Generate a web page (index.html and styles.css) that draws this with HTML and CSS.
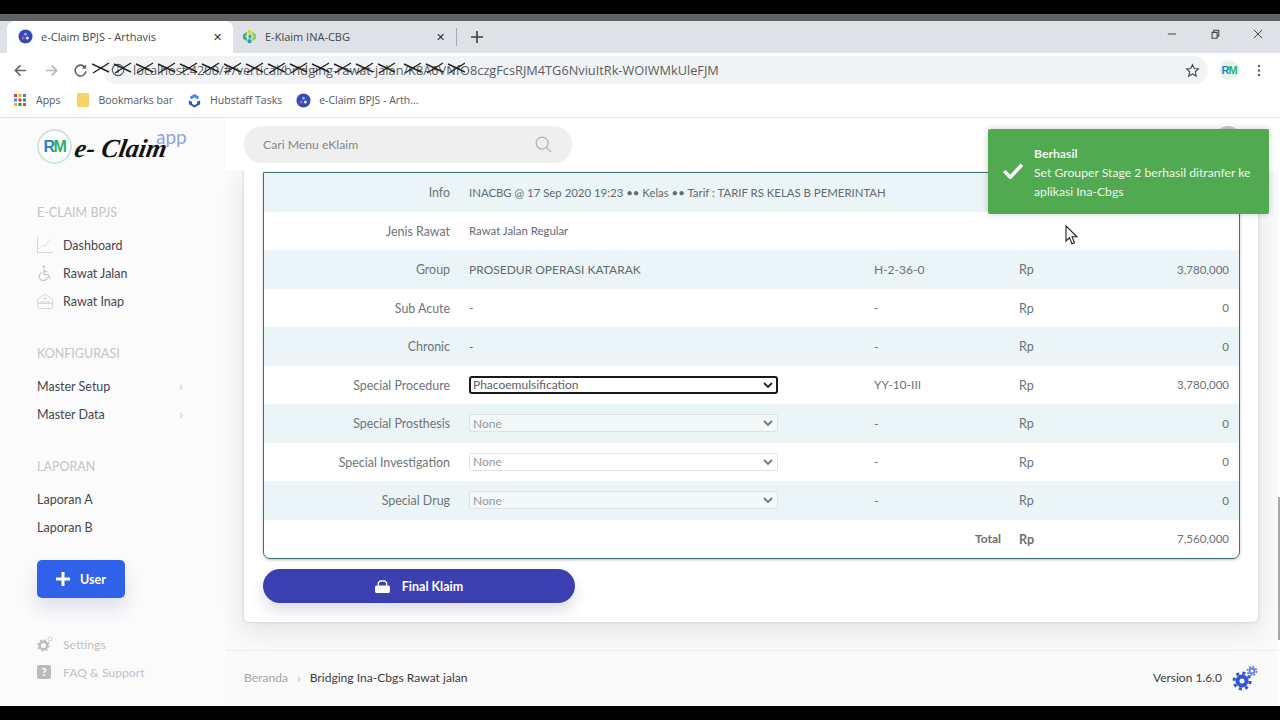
FILE: index.html
```html
<!DOCTYPE html>
<html lang="id">
  <head>
    <meta charset="UTF-8" />
    <title>e-Claim BPJS - Arthavis</title>
    <link rel="stylesheet" href="styles.css">
  </head>
  <body>
    <div class="letterbox-top"></div>

    <!-- Browser: tabs -->
    <div class="tabbar">
      <div class="tab tab-active">
        <svg class="favicon" viewBox="0 0 16 16"><circle cx="8" cy="8" r="7.500" fill="#2f4cb8"/><circle cx="5.600" cy="9.500" r="1.600" fill="#e8506a"/><circle cx="10" cy="9.500" r="1.600" fill="#e8eaf6"/><circle cx="8" cy="5.500" r="1.400" fill="#9fb2ee"/></svg>
        <span class="tab-title">e-Claim BPJS - Arthavis</span>
        <span class="tab-close">✕</span>
      </div>
      <div class="tab">
        <svg class="favicon" viewBox="0 0 16 16"><path d="M6 1h4v4H6z" fill="#e4d43a"/><path d="M1 6l4-3v4l-2 1 2 1v4L1 10z" fill="#35b27a"/><path d="M7 6h3v4H7z" fill="#35b27a"/><path d="M11 3l4 3v4l-4 3v-4l2-1-2-1z" fill="#8ccf47"/><path d="M6 11h4v4H6z" fill="#2d9bc7"/></svg>
        <span class="tab-title">E-Klaim INA-CBG</span>
        <span class="tab-close">✕</span>
      </div>
      <span class="tab-sep"></span>
      <svg class="new-tab" viewBox="0 0 12 12"><path d="M6 0v12M0 6h12" stroke="#3c4043" stroke-width="1.600"/></svg>
      <div class="window-btns">
        <svg viewBox="0 0 12 12"><path d="M1 6h10" stroke="#444" stroke-width="1.200"/></svg>
        <svg viewBox="0 0 12 12"><path d="M2.500 4h6v7h-6zM4.500 4V1.500h6v7H8.500" fill="none" stroke="#444" stroke-width="1.300"/></svg>
        <svg viewBox="0 0 12 12"><path d="M1 1l10 10M11 1L1 11" stroke="#444" stroke-width="1.200"/></svg>
      </div>
    </div>

    <!-- Browser: address bar -->
    <div class="toolbar">
      <svg class="nav-icon" viewBox="0 0 16 16"><path d="M14 8H3M8 2.500L2.500 8 8 13.500" fill="none" stroke="#5f6368" stroke-width="1.700"/></svg>
      <svg class="nav-icon nav-forward" viewBox="0 0 16 16"><path d="M2 8h11M8 2.500L13.500 8 8 13.500" fill="none" stroke="#b4b7bb" stroke-width="1.700"/></svg>
      <svg class="nav-icon" viewBox="0 0 16 16"><path d="M13 5A5.800 5.800 0 1 0 13.800 9" fill="none" stroke="#5f6368" stroke-width="1.700"/><path d="M14 1.500V6H9.500z" fill="#5f6368"/></svg>
      <div class="omnibox">
        <svg class="info-icon" viewBox="0 0 16 16"><circle cx="8" cy="8" r="6.500" fill="none" stroke="#5f6368" stroke-width="1.400"/><path d="M8 7v4.500M8 4.500v1.400" stroke="#5f6368" stroke-width="1.400"/></svg>
        <span class="url">localhost:4200/#/vertical/bridging-rawat-jalan/K8A6VNfO8czgFcsRJM4TG6NviuItRk-WOIWMkUleFJM</span>
        <svg class="star" viewBox="0 0 16 16"><path d="M8 1.800l1.900 4.100 4.400.5-3.300 3 .9 4.400L8 11.600l-3.900 2.200.9-4.400-3.300-3 4.400-.5z" fill="none" stroke="#4a4d51" stroke-width="1.300"/></svg>
      </div>
      <span class="profile"><b>R</b><i>M</i></span>
      <svg class="menu-dots" viewBox="0 0 4 16"><circle cx="2" cy="2.500" r="1.500" fill="#5f6368"/><circle cx="2" cy="8" r="1.500" fill="#5f6368"/><circle cx="2" cy="13.500" r="1.500" fill="#5f6368"/></svg>
      <!-- coretan X di atas url -->
      <svg class="scribble" viewBox="0 0 373 12">
        <path d="M0 2l17 8M17 1L1 11M22 2l17 8M39 1L23 11M44 2l17 8M61 1L45 11M66 2l17 8M83 1L67 11M88 2l17 8M105 1L89 11M110 2l17 8M127 1l-16 10M132 2l17 8M149 1l-16 10M154 2l17 8M171 1l-16 10M176 2l17 8M193 1l-16 10M198 2l17 8M215 1l-16 10M220 2l17 8M237 1l-16 10M242 2l17 8M259 1l-16 10M264 2l17 8M281 1l-16 10M286 2l17 8M303 1l-16 10M312 2l17 8M329 1l-16 10M334 2l17 8M351 1l-16 10M356 2l17 8M373 1l-16 10" fill="none" stroke="#222" stroke-width="1.400"/>
      </svg>
    </div>

    <!-- Browser: bookmarks -->
    <div class="bookmarks">
      <span class="bookmark">
        <svg class="bm-icon" viewBox="0 0 12 12">
          <path d="M0 0h3v3H0z" fill="#db4437"/><path d="M4.500 0h3v3h-3z" fill="#f4b400"/><path d="M9 0h3v3H9z" fill="#4285f4"/>
          <path d="M0 4.500h3v3H0z" fill="#4285f4"/><path d="M4.500 4.500h3v3h-3z" fill="#db4437"/><path d="M9 4.500h3v3H9z" fill="#0f9d58"/>
          <path d="M0 9h3v3H0z" fill="#f4b400"/><path d="M4.500 9h3v3h-3z" fill="#0f9d58"/><path d="M9 9h3v3H9z" fill="#db4437"/>
        </svg>Apps
      </span>
      <span class="bookmark">
        <svg class="bm-icon bm-folder" viewBox="0 0 12 14"><path d="M1 0h10l1 1v12l-1 1H1l-1-1V1z" fill="#f6d365"/></svg>Bookmarks bar
      </span>
      <span class="bookmark">
        <svg class="bm-icon bm-hub" viewBox="0 0 16 16"><path d="M8 1l5 3-1.500 3L8 4.500 4.500 7 3 4z" fill="#3f8fe8"/><path d="M2 8l3 1 .5 2.500L8 13l2.500-1.500L11 9l3-1v4l-6 3.500L2 12z" fill="#2456c8"/></svg>Hubstaff Tasks
      </span>
      <span class="bookmark">
        <svg class="bm-icon bm-hub" viewBox="0 0 16 16"><circle cx="8" cy="8" r="7.500" fill="#2f4cb8"/><circle cx="5.600" cy="9.500" r="1.600" fill="#e8506a"/><circle cx="10" cy="9.500" r="1.600" fill="#e8eaf6"/><circle cx="8" cy="5.500" r="1.400" fill="#9fb2ee"/></svg>e-Claim BPJS - Arth...
      </span>
    </div>

    <div class="app">
      <!-- Sidebar -->
      <aside class="sidebar">
        <div class="logo">
          <span class="logo-mark"><b>R</b><i>M</i></span>
          <span class="logo-text">e- Claim</span>
          <span class="logo-app">app</span>
        </div>

        <h4 class="nav-title first">E-CLAIM BPJS</h4>
        <a class="nav-item">
          <svg class="nav-svg" viewBox="0 0 16 16"><path d="M.5 0v15.500H16" fill="none" stroke="#d4d6da"/><path d="M2.500 12l3-4 2.500 2 3-5 3-3" fill="none" stroke="#d4d6da" stroke-dasharray="1.500 1"/></svg>
          Dashboard
        </a>
        <a class="nav-item">
          <svg class="nav-svg" viewBox="0 0 16 16"><circle cx="7" cy="1.800" r="1.300" fill="#c4c7cb"/><path d="M7 4v5.500h4l2 4.500M7 6.500h3.500M4.800 7.500a4.200 4.200 0 1 0 5.600 5" fill="none" stroke="#c4c7cb" stroke-width="1.200"/></svg>
          Rawat Jalan
        </a>
        <a class="nav-item">
          <svg class="nav-svg" viewBox="0 0 16 16"><path d="M.5 6.500L8 1l7.500 5.500v8l-1 1h-13l-1-1zM.5 10.500h15M3.500 10.500V9h9v1.500M8 4v3M6.500 5.500h3" fill="none" stroke="#d4d6da"/></svg>
          Rawat Inap
        </a>

        <h4 class="nav-title">KONFIGURASI</h4>
        <a class="nav-item plain">Master Setup<span class="chev">›</span></a>
        <a class="nav-item plain">Master Data<span class="chev">›</span></a>

        <h4 class="nav-title">LAPORAN</h4>
        <a class="nav-item plain">Laporan A</a>
        <a class="nav-item plain">Laporan B</a>

        <button class="btn-user">
          <svg viewBox="0 0 14 14"><path d="M7 0v14M0 7h14" stroke="#fff" stroke-width="3"/></svg>
          User
        </button>

        <a class="nav-item muted">
          <svg class="nav-svg" viewBox="0 0 16 16"><circle cx="6.500" cy="9.500" r="3.800" fill="none" stroke="#b9bbbf" stroke-width="2.400"/><circle cx="6.500" cy="9.500" r="5.600" fill="none" stroke="#b9bbbf" stroke-width="1.400" stroke-dasharray="2 2.400"/><circle cx="13" cy="3" r="2" fill="none" stroke="#cfd1d4"/></svg>
          Settings
        </a>
        <a class="nav-item muted">
          <span class="faq-box">?</span>
          FAQ &amp; Support
        </a>
      </aside>

      <div class="content">
        <!-- Topbar -->
        <header class="topbar">
          <div class="search">
            <span>Cari Menu eKlaim</span>
            <svg viewBox="0 0 18 18"><circle cx="7.500" cy="7.500" r="6.300" fill="none" stroke="#b0b2b5" stroke-width="1.300"/><path d="M12 12l5 5" stroke="#b0b2b5" stroke-width="1.300"/></svg>
          </div>
        </header>

        <main class="main">
          <section class="card">
            <div class="panel">
              <div class="row tint">
                <div class="lbl">Info</div>
                <div class="val info-text">INACBG @ 17 Sep 2020 19:23 •• Kelas •• Tarif : TARIF RS KELAS B PEMERINTAH</div>
              </div>
              <div class="row">
                <div class="lbl">Jenis Rawat</div>
                <div class="val info-text">Rawat Jalan Regular</div>
              </div>
              <div class="row tint">
                <div class="lbl">Group</div>
                <div class="val">PROSEDUR OPERASI KATARAK</div>
                <div class="code">H-2-36-0</div>
                <div class="rp">Rp</div>
                <div class="amt">3,780,000</div>
              </div>
              <div class="row">
                <div class="lbl">Sub Acute</div>
                <div class="val">-</div>
                <div class="code">-</div>
                <div class="rp">Rp</div>
                <div class="amt">0</div>
              </div>
              <div class="row tint">
                <div class="lbl">Chronic</div>
                <div class="val">-</div>
                <div class="code">-</div>
                <div class="rp">Rp</div>
                <div class="amt">0</div>
              </div>
              <div class="row">
                <div class="lbl">Special Procedure</div>
                <div class="val"><div class="select focus">Phacoemulsification<svg viewBox="0 0 10 6"><path d="M1 1l4 4 4-4" fill="none" stroke="#222" stroke-width="1.800"/></svg></div></div>
                <div class="code">YY-10-III</div>
                <div class="rp">Rp</div>
                <div class="amt">3,780,000</div>
              </div>
              <div class="row tint">
                <div class="lbl">Special Prosthesis</div>
                <div class="val"><div class="select">None<svg viewBox="0 0 10 6"><path d="M1 1l4 4 4-4" fill="none" stroke="#777" stroke-width="1.800"/></svg></div></div>
                <div class="code">-</div>
                <div class="rp">Rp</div>
                <div class="amt">0</div>
              </div>
              <div class="row">
                <div class="lbl">Special Investigation</div>
                <div class="val"><div class="select">None<svg viewBox="0 0 10 6"><path d="M1 1l4 4 4-4" fill="none" stroke="#777" stroke-width="1.800"/></svg></div></div>
                <div class="code">-</div>
                <div class="rp">Rp</div>
                <div class="amt">0</div>
              </div>
              <div class="row tint">
                <div class="lbl">Special Drug</div>
                <div class="val"><div class="select">None<svg viewBox="0 0 10 6"><path d="M1 1l4 4 4-4" fill="none" stroke="#777" stroke-width="1.800"/></svg></div></div>
                <div class="code">-</div>
                <div class="rp">Rp</div>
                <div class="amt">0</div>
              </div>
              <div class="row">
                <div class="lbl"></div>
                <div class="val"></div>
                <div class="code total-lbl">Total</div>
                <div class="rp total-rp">Rp</div>
                <div class="amt">7,560,000</div>
              </div>
            </div>

            <button class="btn-final">
              <svg viewBox="0 0 16 14"><path d="M1 6h14l1 1v6l-1 1H1l-1-1V7z" fill="#fff"/><path d="M3.500 6V3l2-2h5l2 2v3" fill="none" stroke="#fff" stroke-width="1.500"/></svg>
              Final Klaim
            </button>
          </section>
        </main>

        <footer class="footer">
          <div class="crumbs">
            <span class="crumb-muted">Beranda</span>
            <span class="crumb-sep">›</span>
            <span class="crumb-now">Bridging Ina-Cbgs Rawat jalan</span>
          </div>
          <div class="version">
            Version 1.6.0
            <svg viewBox="0 0 26 26"><circle cx="10" cy="16" r="4.500" fill="none" stroke="#2f55d4" stroke-width="4"/><circle cx="10" cy="16" r="8" fill="none" stroke="#2f55d4" stroke-width="3" stroke-dasharray="3 3.300"/><circle cx="20" cy="6" r="2.500" fill="none" stroke="#5b7be0" stroke-width="1.800"/><circle cx="20" cy="6" r="4.500" fill="none" stroke="#5b7be0" stroke-width="1.500" stroke-dasharray="2 1.500"/></svg>
          </div>
        </footer>
      </div>
      <div class="scrollbar"><span></span></div>

      <!-- Avatar di balik toast -->
      <span class="avatar-ghost"></span>

      <!-- Toast -->
      <div class="toast">
        <svg viewBox="0 0 24 18"><path d="M2 9l7 7L22 2" fill="none" stroke="#fff" stroke-width="4"/></svg>
        <div class="toast-body">
          <strong>Berhasil</strong>
          <p>Set Grouper Stage 2 berhasil ditranfer ke aplikasi Ina-Cbgs</p>
        </div>
      </div>

      <!-- Kursor mouse -->
      <svg class="cursor" viewBox="0 0 14 20"><path d="M1 1v15l3.500-3.200 2.500 6 2.500-1-2.500-6H12z" fill="#fff" stroke="#222" stroke-width="1.100"/></svg>
    </div>

    <div class="letterbox-bottom"></div>
  </body>
</html>
```

FILE: styles.css
```css
/* ====================== RESET ====================== */
* {
  margin: 0;
  padding: 0;
  box-sizing: border-box;
}
html,
body {
  height: 720px;
  overflow: hidden;
}
body {
  display: flex;
  flex-direction: column;
  font-family: "Lato", sans-serif;
  background: #000;
  color: #333;
}
.letterbox-top {
  height: 21px;
  background: linear-gradient(#000 14px, #5f6062 14px);
}
.letterbox-bottom {
  height: 14px;
  background: #000;
}

/* ====================== BROWSER ====================== */
.tabbar {
  height: 32px;
  background: #dee1e6;
  display: flex;
  align-items: flex-end;
  padding-left: 7px;
  font-family: "Open Sans", sans-serif;
  font-size: 11px;
  color: #45484c;
}
.tab {
  width: 226px;
  height: 32px;
  padding: 0 11px 2px 11px;
  display: flex;
  align-items: center;
}
.tab-active {
  background: #fff;
  border-radius: 8px 8px 0 0;
}
.tab + .tab {
  width: 223px;
  padding: 0 11px 2px 9px;
}
.favicon {
  width: 15px;
  height: 15px;
  margin-right: 8px;
}
.tab-title {
  flex: 1;
}
.tab-close {
  font-size: 11px;
  color: #333;
}
.tab-sep {
  width: 1px;
  height: 18px;
  margin: 0 0 7px 0;
  background: #a8abb0;
}
.new-tab {
  width: 12px;
  height: 12px;
  margin: 0 0 10px 14px;
}
.window-btns {
  margin-left: auto;
  display: flex;
  gap: 33px;
  padding: 0 17px 14px 0;
}
.window-btns svg {
  width: 10px;
  height: 10px;
}
.toolbar {
  height: 34px;
  background: #fff;
  display: flex;
  align-items: center;
  position: relative;
  padding-left: 13px;
}
.nav-icon {
  width: 15px;
  height: 15px;
  margin-right: 16px;
}
.nav-forward {
  margin-right: 14px;
}
.omnibox {
  width: 1105px;
  height: 28px;
  margin-left: -1px;
  background: #f1f3f4;
  border-radius: 14px;
  display: flex;
  align-items: center;
  padding: 0 8px 0 8px;
  font-family: "Open Sans", sans-serif;
  font-size: 12.750px;
  color: #5a5d61;
}
.info-icon {
  width: 14px;
  height: 14px;
  margin-right: 8px;
}
.url {
  flex: 1;
  white-space: nowrap;
}
.star {
  width: 15px;
  height: 15px;
}
.profile {
  width: 20px;
  height: 20px;
  margin-left: 11px;
  border-radius: 50%;
  background: #e8f3f0;
  font-size: 11px;
  font-weight: bold;
  line-height: 20px;
  text-align: center;
  font-family: "Liberation Sans", sans-serif;
  letter-spacing: -1px;
}
.profile b,
.logo-mark b {
  color: #1d83c9;
  font-style: normal;
}
.profile i,
.logo-mark i {
  color: #2bb06b;
  font-style: normal;
  font-weight: bold;
}
.menu-dots {
  width: 4px;
  height: 13px;
  margin-left: 18px;
}
.scribble {
  position: absolute;
  left: 92px;
  top: 9px;
  width: 373px;
  height: 12px;
}
.bookmarks {
  height: 31px;
  background: #fff;
  border-bottom: 1px solid #e3e4e6;
  display: flex;
  align-items: center;
  padding: 0 0 4px 14px;
  font-family: "Open Sans", sans-serif;
  font-size: 10.500px;
  color: #55585c;
}
.bookmark {
  display: flex;
  align-items: center;
  margin-right: 14px;
}
.bookmark:first-child {
  margin-right: 16px;
}
.bm-icon {
  width: 12px;
  height: 12px;
  margin-right: 10px;
}
.bm-folder {
  height: 14px;
}
.bm-hub {
  width: 15px;
  height: 15px;
  margin-right: 8px;
}

/* ====================== APP ====================== */
.app {
  flex: 1;
  display: flex;
  position: relative;
  background: #fafafb;
  overflow: hidden;
}
.sidebar {
  width: 226px;
  padding-left: 37px;
  background: #fbfbfc;
  display: flex;
  flex-direction: column;
  align-items: flex-start;
}
.logo {
  height: 56px;
  padding-top: 11px;
  display: flex;
  align-items: flex-start;
  position: relative;
}
.logo-mark {
  width: 35px;
  height: 35px;
  border-radius: 50%;
  border: 2px solid #cfe5e2;
  background: #fff;
  font-family: "Liberation Sans", sans-serif;
  font-size: 16px;
  line-height: 31px;
  text-align: center;
  letter-spacing: -1.500px;
}
.logo-mark b {
  font-weight: bold;
}
.logo-text {
  font-family: "Liberation Serif", serif;
  font-style: italic;
  font-weight: bold;
  font-size: 26px;
  color: #111;
  margin: 5px 0 0 3px;
  transform: skewX(-10deg);
  white-space: nowrap;
}
.logo-app {
  position: absolute;
  left: 119px;
  top: 8px;
  font-size: 19px;
  line-height: 22px;
  color: #8ea2e6;
}
.nav-title {
  font-size: 12.500px;
  font-weight: 400;
  color: #c3c5c9;
  margin: 31px 0 11px;
  line-height: 15px;
  height: 15px;
}
.nav-item {
  height: 28px;
  display: flex;
  align-items: center;
  width: 146px;
  font-size: 12.500px;
  color: #45474b;
  white-space: nowrap;
}
.nav-svg {
  width: 16px;
  height: 16px;
  margin-right: 10px;
}
.chev {
  margin-left: auto;
  font-size: 13px;
  color: #c6c8cb;
}
.btn-user {
  width: 88px;
  height: 38px;
  margin: 19px 0 32px;
  border: 0;
  border-radius: 5px;
  background: #2f62e8;
  color: #fff;
  font-family: "Lato", sans-serif;
  font-size: 12.500px;
  font-weight: 700;
  display: flex;
  align-items: center;
  justify-content: center;
  gap: 10px;
  box-shadow: 0 10px 18px rgba(40, 60, 120, 0.14);
}
.btn-user svg {
  width: 14px;
  height: 14px;
}
.nav-item.muted {
  color: #c0c2c5;
  font-size: 12.200px;
}
.faq-box {
  width: 14px;
  height: 14px;
  margin-right: 12px;
  border-radius: 2px;
  background: #b9bbbf;
  color: #fff;
  font-size: 11px;
  font-weight: 900;
  line-height: 14px;
  text-align: center;
}

/* ====================== CONTENT ====================== */
.content {
  flex: 1;
  display: flex;
  flex-direction: column;
  min-width: 0;
}
.topbar {
  height: 52px;
  background: #fff;
  padding: 8px 0 0 18px;
  position: relative;
  z-index: 1;
}
.search {
  width: 328px;
  height: 37px;
  border-radius: 18px;
  background: #efefef;
  display: flex;
  align-items: center;
  justify-content: space-between;
  padding: 0 20px 0 19px;
  font-size: 12.200px;
  color: #85878b;
}
.search svg {
  width: 17px;
  height: 17px;
}
.main {
  flex: 1;
  padding: 0 20px 28px 18px;
}
.card {
  height: 100%;
  background: #fff;
  border-radius: 0 0 5px 5px;
  padding: 2px 18px 0 19px;
  box-shadow: 0 8px 24px rgba(60, 60, 70, 0.12), 0 0 3px rgba(60, 60, 70, 0.22);
}
.panel {
  border: 1px solid #3f6f72;
  border-bottom-width: 1.500px;
  border-top-width: 1.500px;
  border-radius: 0 0 7px 7px;
  box-shadow: 0 1px 3px rgba(0, 0, 0, 0.25);
}
.row {
  height: 38.500px;
  display: grid;
  grid-template-columns: 186px 424px 145px 1fr 100px;
  align-items: center;
  font-size: 12px;
  color: #6a7276;
  padding-right: 10px;
}
.tint {
  background: #ebf4f6;
}
.lbl {
  text-align: right;
  color: #6e7478;
  font-size: 12.400px;
  padding-top: 1px;
}
.val {
  padding-left: 19px;
  color: #626b6f;
}
.info-text {
  font-size: 11.400px;
  white-space: nowrap;
}
.rp {
  font-size: 12.500px;
  padding-top: 1px;
}
.amt {
  text-align: right;
  font-size: 11.500px;
}
.total-lbl {
  text-align: right;
  font-weight: 700;
  padding-right: 18px;
  color: #6a7074;
}
.total-rp {
  font-weight: 700;
}
.select {
  width: 309px;
  height: 18px;
  display: flex;
  align-items: center;
  justify-content: space-between;
  padding: 0 4px 0 3px;
  background: rgba(255, 255, 255, 0.4);
  border: 1px solid #dde3e6;
  border-radius: 2px;
  color: #92999d;
  font-size: 12px;
}
.select svg {
  width: 10px;
  height: 6px;
}
.select.focus {
  border: 2px solid #1a1a1a;
  border-radius: 3px;
  padding: 0 3px 0 2px;
  background: #fff;
  color: #5a6266;
}
.btn-final {
  width: 312px;
  height: 34px;
  margin-top: 10px;
  border: 0;
  border-radius: 17px;
  background: #3c3fb0;
  color: #fff;
  font-family: "Lato", sans-serif;
  font-size: 12.500px;
  font-weight: 700;
  display: flex;
  align-items: center;
  justify-content: center;
  gap: 12px;
  box-shadow: 0 8px 14px rgba(50, 50, 120, 0.16);
}
.btn-final svg {
  width: 15px;
  height: 13px;
}
.footer {
  height: 56px;
  border-top: 1px solid #ededee;
  padding: 0 22px 2px 18px;
  display: flex;
  align-items: center;
  justify-content: space-between;
  font-size: 12.100px;
}
.crumbs {
  display: flex;
  align-items: center;
}
.crumb-muted {
  color: #a3a5a8;
}
.crumb-sep {
  margin: 0 9px;
  color: #bbb;
  font-size: 13px;
}
.crumb-now,
.version {
  color: #3a3c40;
}
.version {
  display: flex;
  align-items: center;
  gap: 10px;
  margin-right: -2px;
  font-size: 12px;
}
.version svg {
  width: 26px;
  height: 26px;
}
.scrollbar {
  width: 2px;
  background: #fff;
}
.scrollbar span {
  display: block;
  height: 143px;
  margin-top: 379px;
  background: #a9a9a9;
}

/* ====================== OVERLAY ====================== */
.avatar-ghost {
  position: absolute;
  left: 1215px;
  top: 8px;
  width: 26px;
  height: 26px;
  border-radius: 50%;
  background: #c9cbc9;
  z-index: 2;
}
.toast {
  position: absolute;
  left: 988px;
  top: 11px;
  width: 281px;
  height: 85px;
  padding: 15px 10px 0 14px;
  border-radius: 2px;
  background: #51a951;
  color: #eef7ee;
  font-size: 12.200px;
  line-height: 19px;
  display: flex;
  box-shadow: 0 0 6px rgba(0, 0, 0, 0.2);
  z-index: 3;
}
.toast svg {
  width: 22px;
  height: 16px;
  margin: 19px 10px 0 0;
  flex: none;
}
.toast strong {
  display: block;
}
.cursor {
  position: absolute;
  left: 1065px;
  top: 107px;
  width: 14px;
  height: 20px;
  z-index: 3;
}
```
